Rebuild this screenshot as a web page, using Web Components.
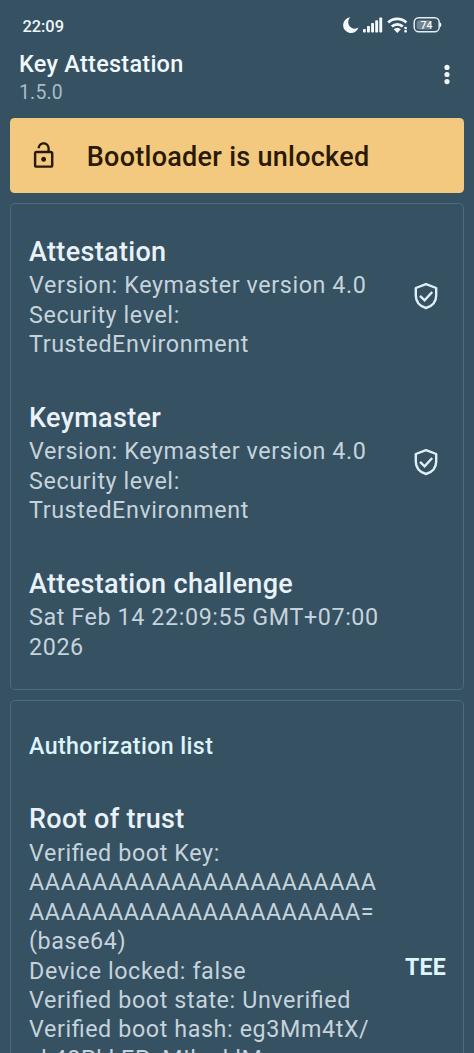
<!DOCTYPE html>
<html lang="en">
<head>
<meta charset="utf-8">
<title>Key Attestation</title>
<style>
html,body{margin:0;height:1053px;overflow:hidden;background:#365162}
body{font-family:Roboto,"Noto Sans",sans-serif;color:#c5d3dc}
</style>
</head>
<body>
<attestation-screen></attestation-screen>
<script>
const define = (name, html) => {
  const template = document.createElement('template');
  template.innerHTML = html;
  customElements.define(name, class extends HTMLElement {
    constructor() {
      super();
      this.attachShadow({ mode: 'open' }).append(template.content.cloneNode(true));
    }
  });
};

define('status-bar', `
<style>
:host{display:flex;justify-content:space-between;height:49px;padding:0 30px 0 22.4px;box-sizing:border-box;color:#eef6fa}
time{font-size:16.4px;font-weight:500;line-height:20px;padding-top:17px}
svg{display:block;width:104px;height:50px}
text{font:500 10.5px Roboto,sans-serif}
</style>
<time>22:09</time>
<svg viewBox="340 0 104 50" fill="#f4fafc">
  <path d="M350.3 17.3a7.9 7.9 0 1 0 8.2 10.3a6.6 6.6 0 0 1-8.2-10.3z"/>
  <rect x="363" y="29" width="2.8" height="3.6" rx=".8"/>
  <rect x="367" y="26" width="2.9" height="6.6" rx=".8"/>
  <rect x="371.1" y="23" width="2.9" height="9.6" rx=".8"/>
  <rect x="375.2" y="20.2" width="2.9" height="12.4" rx=".8"/>
  <rect x="379.3" y="17.5" width="2.9" height="15.1" rx=".8"/>
  <g fill="none" stroke="#f4fafc" stroke-width="2.7">
    <path d="M388.2 22.6a13.2 13.2 0 0 1 18.2 0"/>
    <path d="M391.8 26.6a8 8 0 0 1 11 0"/>
  </g>
  <path d="M393.7 29.2a5 5 0 0 1 7.2 0l-3.6 3.8z"/>
  <rect x="404.3" y="26.7" width="2.6" height="2.5" rx=".8"/><rect x="404.3" y="30" width="2.6" height="2.5" rx=".8"/>
  <rect x="414.2" y="17.8" width="25" height="14" rx="4.6" fill="none" stroke="#e3edf2" stroke-width="1.5"/>
  <path d="M439.8 22.3q1.6.5 1.6 2.5t-1.6 2.5z"/>
  <path d="M419.5 20.2h10.5v9.2h-10.5q-2.9 0-2.9-2.9v-3.4q0-2.9 2.9-2.9z" fill="#718490"/>
  <text x="426.4" y="28.6" text-anchor="middle">74</text>
</svg>`);

define('app-bar', `
<style>
:host{display:flex;justify-content:space-between;height:69px;padding:0 17px 0 19px;box-sizing:border-box}
h1{margin:0;font-size:23.5px;font-weight:500;letter-spacing:.25px;line-height:30px;color:#f0f8fc;white-space:nowrap}
p{margin:0;padding-top:3px;font-size:19.4px;letter-spacing:.2px;line-height:22px;color:#a9bccb}
svg{display:block;width:20px;height:50px;padding-top:1px}
</style>
<div><h1><slot></slot></h1><p><slot name="version"></slot></p></div>
<svg viewBox="437 50 20 50" fill="#eef6fa"><circle cx="447" cy="67.4" r="2.6"/><circle cx="447" cy="74.5" r="2.6"/><circle cx="447" cy="81.6" r="2.6"/></svg>`);

define('boot-banner', `
<style>
:host{display:flex;align-items:center;gap:28.5px;height:75px;padding:0 19px;box-sizing:border-box;border-radius:4.5px;background:#f2c97f;color:#2a1903;
font-size:27px;font-weight:500;letter-spacing:.27px;line-height:31px;white-space:nowrap}
svg{display:block;width:29.3px;height:29.3px}
span{padding-top:3px}
</style>
<svg viewBox="0 0 24 24" fill="currentColor"><path d="M12 17c1.1 0 2-.9 2-2s-.9-2-2-2-2 .9-2 2 .9 2 2 2zm6-9h-1V6c0-2.76-2.24-5-5-5S7 3.24 7 6h1.9c0-1.71 1.39-3.1 3.1-3.1s3.1 1.39 3.1 3.1v2H6c-1.1 0-2 .9-2 2v10c0 1.1.9 2 2 2h12c1.1 0 2-.9 2-2V10c0-1.1-.9-2-2-2zm0 12H6V10h12v10z"/></svg>
<span><slot></slot></span>`);

define('info-card', `
<style>
:host{display:flex;flex-direction:column;gap:40.1px;padding:29.8px 17.5px 27.2px 18px;border:1px solid #4c6b7c;border-radius:5px}
::slotted(h2){margin:2.2px 0 .8px;font-size:23.2px;font-weight:500;letter-spacing:.4px;line-height:27.2px;color:#dcf3fa}
</style><slot></slot>`);

define('info-item', `
<style>
:host{display:flex;align-items:center;justify-content:space-between}
h3{margin:0;font-size:27px;font-weight:500;letter-spacing:.33px;line-height:36px;color:#e9f2f9;white-space:nowrap}
.body{padding-top:1.6px;font-size:23.3px;letter-spacing:.6px;line-height:29.4px;white-space:nowrap;font-feature-settings:"liga" 1;min-height:var(--body-height,0)}
.end{display:flex;justify-content:center;width:40px;padding-bottom:2px;color:#def3fa}
</style>
<div><h3><slot name="title"></slot></h3><div class="body"><slot></slot></div></div>
<div class="end"><slot name="end"></slot></div>`);

define('shield-icon', `
<style>:host{display:block}svg{display:block;width:24px;height:28px}</style>
<svg viewBox="0 0 24 28" fill="none" stroke="#dcf1f7" stroke-width="2.4" stroke-linejoin="round">
<path d="M12 2.2L22.2 6V13.4C22.2 19.6 18 24.1 12 26C6 24.1 1.8 19.6 1.8 13.4V6Z"/><path d="M6 13.8L10.6 18.3L18.2 10" stroke-linejoin="miter"/></svg>`);

define('tee-label', `
<style>:host{display:block;padding-top:3px;font-size:23.1px;font-weight:700;letter-spacing:.2px;line-height:27px;color:#dff5fc}</style><slot></slot>`);

define('attestation-screen', `
<style>
:host{display:block;height:1053px;overflow:hidden}
main{display:flex;flex-direction:column;gap:10px;padding:0 10px}
.trust{--body-height:294px}
</style>
<status-bar></status-bar>
<app-bar>Key Attestation<span slot="version">1.5.0</span></app-bar>
<main>
  <boot-banner>Bootloader is unlocked</boot-banner>
  <info-card>
    <info-item><span slot="title">Attestation</span>Version: Keymaster version 4.0<br>Security level:<br>TrustedEnvironment<shield-icon slot="end"></shield-icon></info-item>
    <info-item><span slot="title">Keymaster</span>Version: Keymaster version 4.0<br>Security level:<br>TrustedEnvironment<shield-icon slot="end"></shield-icon></info-item>
    <info-item><span slot="title">Attestation challenge</span>Sat Feb 14 22:09:55 GMT+07:00<br>2026</info-item>
  </info-card>
  <info-card>
    <h2>Authorization list</h2>
    <info-item class="trust"><span slot="title">Root of trust</span>Verified boot Key:<br>AAAAAAAAAAAAAAAAAAAAAA<br>AAAAAAAAAAAAAAAAAAAAA=<br>(base64)<br>Device locked: false<br>Verified boot state: Unverified<br>Verified boot hash: eg3Mm4tX/<br>xk48PkkEPxMIlucklM<tee-label slot="end">TEE</tee-label></info-item>
  </info-card>
</main>`);
</script>
</body>
</html>
